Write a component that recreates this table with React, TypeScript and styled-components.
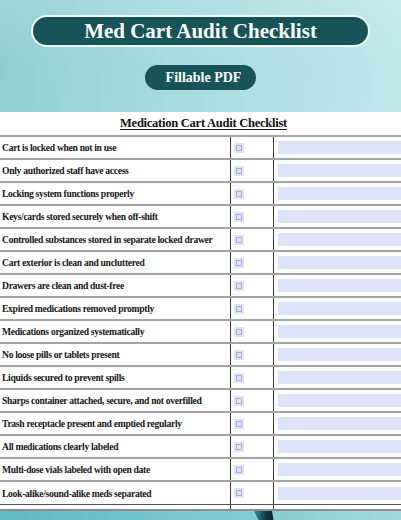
import React, { FC } from 'react';
import styled, { createGlobalStyle } from 'styled-components';

const items = [
	'Cart is locked when not in use',
	'Only authorized staff have access',
	'Locking system functions properly',
	'Keys/cards stored securely when off-shift',
	'Controlled substances stored in separate locked drawer',
	'Cart exterior is clean and uncluttered',
	'Drawers are clean and dust-free',
	'Expired medications removed promptly',
	'Medications organized systematically',
	'No loose pills or tablets present',
	'Liquids secured to prevent spills',
	'Sharps container attached, secure, and not overfilled',
	'Trash receptacle present and emptied regularly',
	'All medications clearly labeled',
	'Multi-dose vials labeled with open date',
	'Look-alike/sound-alike meds separated',
];

const GlobalStyle = createGlobalStyle`
	body {
		margin: 0;
		background: #ffffff;
		font-family: 'Liberation Serif', 'Times New Roman', serif;
	}
`;

const Page = styled.div`
	width: 401px;
	height: 520px;
	overflow: hidden;
	display: flex;
	flex-direction: column;
`;

const Banner = styled.header`
	height: 112px;
	box-sizing: border-box;
	padding-top: 15px;
	display: flex;
	flex-direction: column;
	align-items: center;
	gap: 18px;
	background:
		linear-gradient(180deg, rgba(255, 255, 255, 0.12) 0%, rgba(255, 255, 255, 0) 60%),
		linear-gradient(100deg, #8ccdd4 0%, #a6dbe0 45%, #c2e7eb 100%);
`;

const Pill = styled.div<{ big?: boolean }>`
	box-sizing: border-box;
	display: flex;
	align-items: center;
	justify-content: center;
	background: #17545a;
	color: #ffffff;
	font-weight: 700;
	width: ${(p) => (p.big ? '339px' : '111px')};
	height: ${(p) => (p.big ? '32px' : '25px')};
	border-radius: 20px;
	border: ${(p) => (p.big ? '2px solid #f4fbfb' : 'none')};
	font-size: ${(p) => (p.big ? '21px' : '14px')};
	padding-left: ${(p) => (p.big ? '0' : '6px')};
`;

const Sheet = styled.main`
	flex: 1;
	display: flex;
	flex-direction: column;
	background: #ffffff;
`;

const SheetTitle = styled.h1`
	margin: 0;
	height: 23px;
	display: flex;
	align-items: center;
	justify-content: center;
	padding-left: 6px;
	font-size: 12.5px;
	font-weight: 700;
	letter-spacing: -0.25px;
	color: #111;
	text-decoration: underline;
	text-underline-offset: 2px;
`;

const Table = styled.div`
	border-top: 2px solid #a4a4a4;
`;

const Row = styled.div`
	display: grid;
	grid-template-columns: 231px 43px 1fr;
	height: 23px;
	box-sizing: border-box;
	border-bottom: 2px solid #a4a4a4;

	&:last-child {
		border-bottom: 1px solid #555;
	}
`;

const Label = styled.div`
	display: flex;
	align-items: center;
	padding-left: 2px;
	white-space: nowrap;
	overflow: hidden;
	font-size: 9.6px;
	font-weight: 700;
	letter-spacing: -0.3px;
	color: #151515;
	border-right: 1px solid #3a3a3a;
`;

const CheckCell = styled.div`
	display: flex;
	align-items: center;
	padding-left: 3px;
	border-right: 1px solid #3a3a3a;
`;

const Box = styled.span`
	width: 10px;
	height: 10px;
	background: #dfe3f7;
	display: flex;
	align-items: center;
	justify-content: center;

	&::after {
		content: '';
		width: 4px;
		height: 4px;
		border: 1px solid #a8aed0;
	}
`;

const FieldCell = styled.div`
	display: flex;
	align-items: center;
	padding-left: 4px;
`;

const Field = styled.span`
	flex: 1;
	height: 13px;
	background: #dde3fb;
`;

const Footer = styled.footer`
	flex: 1;
	display: flex;
	flex-direction: column;
`;

const FooterGap = styled.div`
	height: 4px;
	display: grid;
	grid-template-columns: 231px 43px 1fr;
	background: #ffffff;
	border-bottom: 2px solid #8d8d8d;

	span {
		border-right: 1px solid #3a3a3a;
	}
`;

const Photo = styled.div`
	flex: 1;
	position: relative;
	background: linear-gradient(90deg, #5fb9bf 0%, #7fcbd0 55%, #9fd8dc 100%);

	svg {
		position: absolute;
		left: 250px;
		top: 0;
	}
`;

const ChecklistRow: FC<{ text: string }> = ({ text }) => (
	<Row>
		<Label>{text}</Label>
		<CheckCell>
			<Box />
		</CheckCell>
		<FieldCell>
			<Field />
		</FieldCell>
	</Row>
);

export default function App() {
	return (
		<Page>
			<GlobalStyle />
			<Banner>
				<Pill big>Med Cart Audit Checklist</Pill>
				<Pill>Fillable PDF</Pill>
			</Banner>
			<Sheet>
				<SheetTitle>Medication Cart Audit Checklist</SheetTitle>
				<Table>
					{items.map((t) => (
						<ChecklistRow key={t} text={t} />
					))}
				</Table>
				<Footer>
					<FooterGap>
						<span />
						<span />
					</FooterGap>
					<Photo>
						<svg width="30" height="12" viewBox="0 0 30 12">
							<defs>
								<linearGradient id="band" x1="0" x2="1" y1="0" y2="0">
									<stop offset="0" stopColor="#2f8f96" />
									<stop offset="0.6" stopColor="#123c40" />
									<stop offset="1" stopColor="#0c2528" />
								</linearGradient>
							</defs>
							<path d="M4 0 L10 12 L24 12 L22 0 Z" fill="url(#band)" />
						</svg>
					</Photo>
				</Footer>
			</Sheet>
		</Page>
	);
}
